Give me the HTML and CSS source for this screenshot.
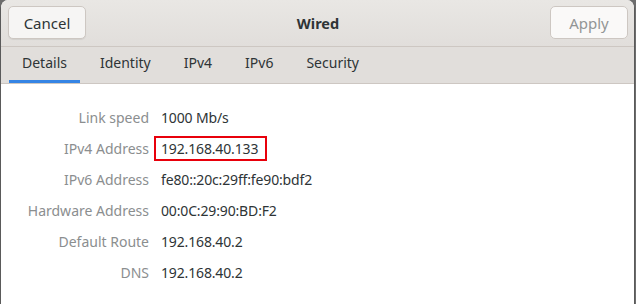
FILE: index.html
```html
<!DOCTYPE html>
<html lang="en">
<head>
  <meta charset="UTF-8" />
  <title>Wired</title>
  <link rel="stylesheet" href="styles.css">
</head>
<body>
  <div class="window">
    <!-- Header bar -->
    <div class="headerbar">
      <button class="btn">Cancel</button>
      <span class="title">Wired</span>
      <button class="btn" disabled>Apply</button>
    </div>

    <!-- Tabs -->
    <div class="tabs">
      <span class="tab active">Details</span>
      <span class="tab">Identity</span>
      <span class="tab">IPv4</span>
      <span class="tab">IPv6</span>
      <span class="tab">Security</span>
    </div>

    <!-- Details page -->
    <div class="details">
      <span class="label">Link speed</span>
      <span class="value">1000 Mb/s</span>
      <span class="label">IPv4 Address</span>
      <span class="value"><span class="marked">192.168.40.133</span></span>
      <span class="label">IPv6 Address</span>
      <span class="value">fe80::20c:29ff:fe90:bdf2</span>
      <span class="label">Hardware Address</span>
      <span class="value">00:0C:29:90:BD:F2</span>
      <span class="label">Default Route</span>
      <span class="value">192.168.40.2</span>
      <span class="label">DNS</span>
      <span class="value">192.168.40.2</span>
    </div>
  </div>
</body>
</html>
```

FILE: styles.css
```css
* { box-sizing: border-box; }
body {
  margin: 0;
  background-color: #6d6d6d;
  font-family: 'Noto Sans', sans-serif;
  font-size: 14px;
  color: #2e3436;
}

.window {
  width: 635px;
  height: 304px;
  background-color: #fff;
  border-left: 1px solid #5a5a5a;
  border-right: 1px solid #5a5a5a;
  border-radius: 8px 8px 0 0;
  overflow: hidden;
}

.headerbar {
  height: 47px;
  display: flex;
  align-items: center;
  justify-content: space-between;
  padding: 0 6px 1px 7px;
  background: linear-gradient(#e9e7e4, #e1dedb);
  border-bottom: 1px solid #cdc7c2;
}

.btn {
  height: 33px;
  width: 78px;
  font-family: inherit;
  font-size: 15px;
  color: #2e3436;
  background-color: #f6f5f4;
  border: 1px solid #cdc7c2;
  border-radius: 5px;
  box-shadow: 0 1px 1px rgba(0, 0, 0, 0.07);
}

.btn:disabled {
  color: #929595;
  background-color: #faf9f8;
  box-shadow: none;
}

.title {
  font-weight: bold;
  font-size: 14.5px;
}

/* Notebook tabs */
.tabs {
  height: 37px;
  display: flex;
  gap: 7px;
  padding-left: 8px;
  background-color: #e1dedb;
  border-bottom: 1px solid #cdc7c2;
}

.tab {
  display: flex;
  align-items: center;
  padding: 0 13px 3px;
  font-size: 14px;
  border-bottom: 3px solid transparent;
}

.tab.active { border-bottom-color: #3584e4; }

/* Details grid */
.details {
  display: grid;
  grid-template-columns: 148px auto;
  column-gap: 12px;
  grid-auto-rows: 31px;
  align-items: center;
  padding-top: 18px;
}

.label {
  text-align: right;
  color: #8b8e8f;
}

.value {
  color: #2e3436;
  letter-spacing: -0.15px;
}

.marked {
  display: inline-block;
  margin-left: -7px;
  padding: 1px 7px 1px 5px;
  border: 2px solid #e8000b;
}
```
